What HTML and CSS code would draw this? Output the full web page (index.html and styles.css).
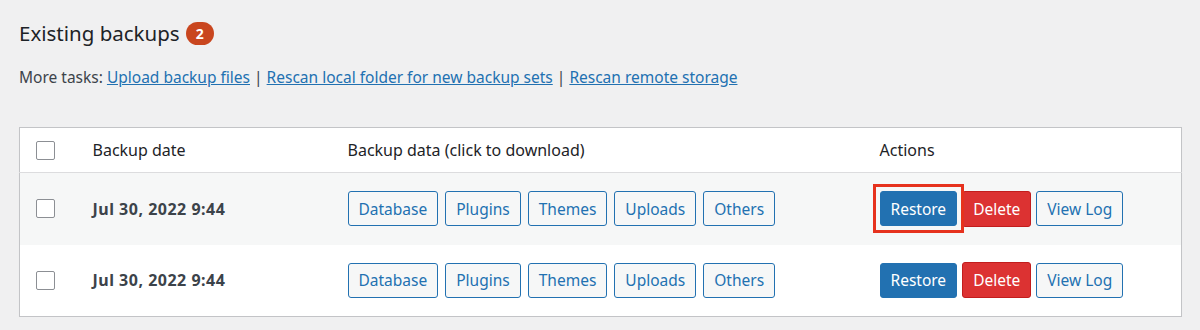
FILE: index.html
```html
<!DOCTYPE html>
<html>
  <head>
    <title>Existing backups</title>
    <link rel="stylesheet" href="styles.css">
  </head>
  <body>
    <div class="wrap">
      <h2 class="title">Existing backups <span class="count">2</span></h2>

      <p class="tasks">
        More tasks:
        <a href="#">Upload backup files</a> |
        <a href="#">Rescan local folder for new backup sets</a> |
        <a href="#">Rescan remote storage</a>
      </p>

      <table class="backups">
        <thead>
          <tr>
            <th class="col-check"><span class="check"></span></th>
            <th class="col-date">Backup date</th>
            <th class="col-data">Backup data (click to download)</th>
            <th class="col-actions">Actions</th>
          </tr>
        </thead>
        <tbody>
          <tr class="alt">
            <td class="col-check"><span class="check"></span></td>
            <td class="col-date date">Jul 30, 2022 9:44</td>
            <td class="col-data">
              <div class="btn-row">
                <button class="btn">Database</button>
                <button class="btn">Plugins</button>
                <button class="btn">Themes</button>
                <button class="btn">Uploads</button>
                <button class="btn">Others</button>
              </div>
            </td>
            <td class="col-actions">
              <div class="btn-row">
                <button class="btn btn-primary marked">Restore</button>
                <button class="btn btn-delete">Delete</button>
                <button class="btn">View Log</button>
              </div>
            </td>
          </tr>
          <tr>
            <td class="col-check"><span class="check"></span></td>
            <td class="col-date date">Jul 30, 2022 9:44</td>
            <td class="col-data">
              <div class="btn-row">
                <button class="btn">Database</button>
                <button class="btn">Plugins</button>
                <button class="btn">Themes</button>
                <button class="btn">Uploads</button>
                <button class="btn">Others</button>
              </div>
            </td>
            <td class="col-actions">
              <div class="btn-row">
                <button class="btn btn-primary">Restore</button>
                <button class="btn btn-delete">Delete</button>
                <button class="btn">View Log</button>
              </div>
            </td>
          </tr>
        </tbody>
      </table>
    </div>
  </body>
</html>
```

FILE: styles.css
```css
* {
  margin: 0;
  padding: 0;
  box-sizing: border-box;
}

body {
  font-family: "Noto Sans", "Open Sans", sans-serif;
  font-size: 15.5px;
  background-color: #f0f0f1;
  color: #3c434a;
}

.wrap {
  padding: 20px 18px 0 19px;
}

.title {
  display: flex;
  align-items: center;
  gap: 6px;
  font-size: 20.5px;
  font-weight: 400;
  color: #1d2327;
  height: 26px;
}

.count {
  display: inline-flex;
  align-items: center;
  justify-content: center;
  width: 28px;
  height: 23px;
  border-radius: 12px;
  background: #c9461f;
  color: white;
  font-size: 14px;
  font-weight: 700;
}

.tasks {
  margin-top: 20px;
  color: #3c434a;
}

.tasks a {
  color: #2271b1;
}

.backups {
  margin-top: 39px;
  width: 100%;
  border-collapse: collapse;
  background: white;
  border: 1px solid #c3c4c7;
  box-shadow: 0 1px 1px rgba(0, 0, 0, 0.04);
}

.backups th {
  text-align: left;
  font-size: 16px;
  font-weight: 400;
  color: #1d2327;
  height: 45px;
  border-bottom: 1px solid #dcdcde;
}

.backups td {
  height: 72px;
}

.backups tr.alt td {
  background: #f6f7f7;
}

.col-check {
  width: 73px;
  padding-left: 16px;
}

.col-date {
  width: 255px;
}

.col-data {
  width: 532px;
}

.date {
  font-size: 16px;
  font-weight: 700;
  letter-spacing: 0.5px;
  color: #3c434a;
}

.check {
  display: block;
  width: 19px;
  height: 19px;
  border: 1px solid #8c8f94;
  border-radius: 2px;
  background: white;
}

.btn-row {
  display: flex;
  align-items: center;
  gap: 7px;
}

.col-actions .btn-row {
  gap: 5px;
}

.btn {
  font-family: inherit;
  font-size: 15.5px;
  height: 35px;
  padding: 0 10px;
  border: 1px solid #2271b1;
  border-radius: 3px;
  background: #f6f7f7;
  color: #2271b1;
  cursor: pointer;
}

.btn-primary {
  background: #2271b1;
  color: white;
}

.btn-delete {
  height: 36px;
  background: #dc3232;
  border-color: #c21d1d;
  color: white;
}

.marked {
  position: relative;
}

.marked::after {
  content: "";
  position: absolute;
  inset: -8px;
  border: 3px solid #e6321e;
}
```
